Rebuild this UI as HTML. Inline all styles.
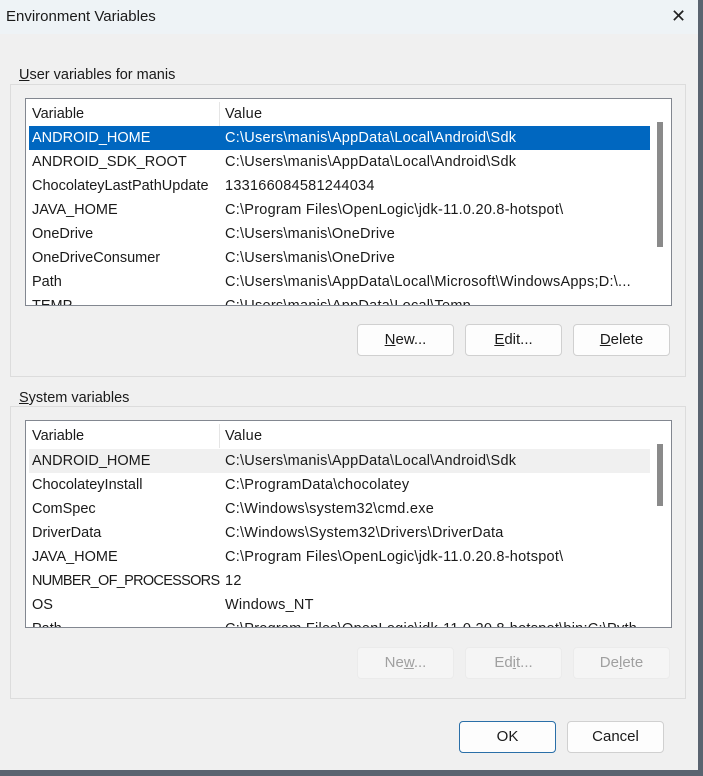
<!DOCTYPE html>
<html><head><style>
*{margin:0;padding:0;box-sizing:border-box}
body{width:703px;height:776px;background:#5a6470;position:relative;overflow:hidden;font-family:"Liberation Sans",sans-serif;font-size:14.5px;color:#1a1a1a}
.win{position:absolute;left:0;top:0;width:698px;height:770px;background:#f0f0f0}
.title{position:absolute;left:0;top:0;width:698px;height:34px;background:#eef3f6;font-size:15px}
.title span{position:absolute;left:6px;top:8px}
.x{position:absolute;left:671px;top:6px;font-size:18px;color:#222}
.grp{position:absolute;left:10px;width:676px;border:1px solid #dcdcdc}
.lbl{position:absolute;left:19px;background:#f0f0f0;padding-right:4px;font-size:14.5px}
.list{position:absolute;left:25px;width:647px;height:208px;background:#fff;border:1px solid #828790;overflow:hidden}
.row{position:absolute;left:5px;width:619px;height:24px;line-height:24px;white-space:nowrap}
.row .a{position:absolute;left:1px}
.row .b{position:absolute;left:194px;letter-spacing:0.25px}
.sep{position:absolute;left:188px;top:0;width:1px;height:24px;background:#e5e5e5}
.sb{position:absolute;left:631px;top:22px;width:6px;background:#8a8a8a}
.btn{position:absolute;height:32px;width:97px;border:1px solid #d0d0d0;border-radius:4px;background:#fdfdfd;text-align:center;line-height:30px;font-size:15px}
.dis{color:#a0a0a0;background:#f5f5f5;border-color:#ebebeb}
u{text-decoration:underline}
</style></head><body>
<div class="win">
<div class="title"><span>Environment Variables</span><div class="x">✕</div></div>

<div class="grp" style="top:84px;height:293px"></div>
<div class="lbl" style="top:67px"><u>U</u>ser variables for manis</div>
<div class="list" style="top:98px">
 <div class="row" style="top:3px"><span class="a">Variable</span><div class="sep"></div><span class="b">Value</span></div>
 <div class="row" style="top:27px;background:#0067c0;color:#fff;left:3px;width:621px"><span class="a" style="left:3px">ANDROID_HOME</span><span class="b" style="left:196px">C:\Users\manis\AppData\Local\Android\Sdk</span></div>
 <div class="row" style="top:51px"><span class="a">ANDROID_SDK_ROOT</span><span class="b">C:\Users\manis\AppData\Local\Android\Sdk</span></div>
 <div class="row" style="top:75px"><span class="a">ChocolateyLastPathUpdate</span><span class="b">133166084581244034</span></div>
 <div class="row" style="top:99px"><span class="a">JAVA_HOME</span><span class="b">C:\Program Files\OpenLogic\jdk-11.0.20.8-hotspot\</span></div>
 <div class="row" style="top:123px"><span class="a">OneDrive</span><span class="b">C:\Users\manis\OneDrive</span></div>
 <div class="row" style="top:147px"><span class="a">OneDriveConsumer</span><span class="b">C:\Users\manis\OneDrive</span></div>
 <div class="row" style="top:171px"><span class="a">Path</span><span class="b">C:\Users\manis\AppData\Local\Microsoft\WindowsApps;D:\...</span></div>
 <div class="row" style="top:195px"><span class="a">TEMP</span><span class="b">C:\Users\manis\AppData\Local\Temp</span></div>
 <div class="sb" style="top:23px;height:125px"></div>
</div>
<div class="btn" style="left:357px;top:324px"><u>N</u>ew...</div>
<div class="btn" style="left:465px;top:324px"><u>E</u>dit...</div>
<div class="btn" style="left:573px;top:324px"><u>D</u>elete</div>

<div class="grp" style="top:406px;height:293px"></div>
<div class="lbl" style="top:390px"><u>S</u>ystem variables</div>
<div class="list" style="top:420px">
 <div class="row" style="top:3px"><span class="a">Variable</span><div class="sep"></div><span class="b">Value</span></div>
 <div class="row" style="top:28px;background:#f0f0f0;left:3px;width:621px"><span class="a" style="left:3px">ANDROID_HOME</span><span class="b" style="left:196px">C:\Users\manis\AppData\Local\Android\Sdk</span></div>
 <div class="row" style="top:52px"><span class="a">ChocolateyInstall</span><span class="b">C:\ProgramData\chocolatey</span></div>
 <div class="row" style="top:76px"><span class="a">ComSpec</span><span class="b">C:\Windows\system32\cmd.exe</span></div>
 <div class="row" style="top:100px"><span class="a">DriverData</span><span class="b">C:\Windows\System32\Drivers\DriverData</span></div>
 <div class="row" style="top:124px"><span class="a">JAVA_HOME</span><span class="b">C:\Program Files\OpenLogic\jdk-11.0.20.8-hotspot\</span></div>
 <div class="row" style="top:148px"><span class="a" style="letter-spacing:-0.7px">NUMBER_OF_PROCESSORS</span><span class="b">12</span></div>
 <div class="row" style="top:172px"><span class="a">OS</span><span class="b">Windows_NT</span></div>
 <div class="row" style="top:196px"><span class="a">Path</span><span class="b">C:\Program Files\OpenLogic\jdk-11.0.20.8-hotspot\bin;C:\Pyth</span></div>
 <div class="sb" style="top:23px;height:62px"></div>
</div>
<div class="btn dis" style="left:357px;top:647px">Ne<u>w</u>...</div>
<div class="btn dis" style="left:465px;top:647px">Ed<u>i</u>t...</div>
<div class="btn dis" style="left:573px;top:647px">De<u>l</u>ete</div>

<div class="btn" style="left:459px;top:721px;border:1px solid #2a6fa8">OK</div>
<div class="btn" style="left:567px;top:721px">Cancel</div>
</div>
</body></html>
